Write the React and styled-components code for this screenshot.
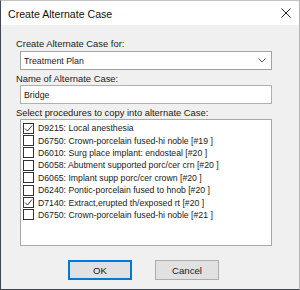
import styled, { createGlobalStyle } from "styled-components";

const GlobalStyle = createGlobalStyle`
  html, body {
    margin: 0;
    padding: 0;
    background: #f0f0f0;
  }
  * {
    box-sizing: border-box;
  }
`;

const procedures = [
  { code: "D9215", text: "Local anesthesia", checked: true },
  { code: "D6750", text: "Crown-porcelain fused-hi noble [#19 ]" },
  { code: "D6010", text: "Surg place implant: endosteal [#20 ]" },
  { code: "D6058", text: "Abutment supported porc/cer crn [#20 ]" },
  { code: "D6065", text: "Implant supp porc/cer crown [#20 ]" },
  { code: "D6240", text: "Pontic-porcelain fused to hnob [#20 ]" },
  { code: "D7140", text: "Extract,erupted th/exposed rt [#20 ]", checked: true },
  { code: "D6750", text: "Crown-porcelain fused-hi noble [#21 ]" },
];

const App = () => {
  return (
    <>
      <GlobalStyle />
      <Window>
        <TitleBar>
          <Title>Create Alternate Case</Title>
          <CloseButton>
            <svg width="10" height="10" viewBox="0 0 10 10">
              <path d="M0.5 0.5 L9.5 9.5 M9.5 0.5 L0.5 9.5" stroke="#222" strokeWidth="1" />
            </svg>
          </CloseButton>
        </TitleBar>
        <Body>
          <Label $top={12}>Create Alternate Case for:</Label>
          <Combo>
            <span>Treatment Plan</span>
            <svg width="8" height="5" viewBox="0 0 8 5">
              <path d="M0.5 0.5 L4 4 L7.5 0.5" stroke="#555" strokeWidth="1" fill="none" />
            </svg>
          </Combo>
          <Label $top={2}>Name of Alternate Case:</Label>
          <TextBox>Bridge</TextBox>
          <Label $top={2}>Select procedures to copy into alternate Case:</Label>
          <ListBox>
            {procedures.map((p, i) => (
              <Row key={i}>
                <CheckBox>
                  {p.checked && (
                    <svg width="9" height="9" viewBox="0 0 9 9">
                      <path d="M1 4.5 L3.5 7 L8 1.5" stroke="#333" strokeWidth="1" fill="none" />
                    </svg>
                  )}
                </CheckBox>
                <span>
                  {p.code}: {p.text}
                </span>
              </Row>
            ))}
          </ListBox>
          <Buttons>
            <Button $default>OK</Button>
            <Button>Cancel</Button>
          </Buttons>
        </Body>
      </Window>
    </>
  );
};

export default App;

const Window = styled.div`
  width: 300px;
  height: 290px;
  display: flex;
  flex-direction: column;
  background: #f0f0f0;
  border-top: 1px solid #c4c4c4;
  border-right: 1px solid #b4b4b4;
  border-left: 1px solid #3f4552;
  border-bottom: 1px solid #3f4552;
  font-family: "Liberation Sans", Arial, sans-serif;
  font-size: 9.4px;
  color: #1a1a1a;
`;

const TitleBar = styled.div`
  height: 24px;
  background: #fff;
  display: flex;
  align-items: center;
  justify-content: space-between;
  padding: 0 8px 0 7px;
`;

const Title = styled.div`
  font-size: 10.6px;
  color: #111;
  margin-top: 1px;
`;

const CloseButton = styled.div`
  width: 10px;
  height: 10px;
  display: flex;
`;

const Body = styled.div`
  flex: 1;
  display: flex;
  flex-direction: column;
  padding: 0 0 0 15px;
`;

const Label = styled.div`
  margin-top: ${(p) => p.$top}px;
  height: 13px;
  line-height: 13px;
`;

const Combo = styled.div`
  margin: 1px 0 0 4px;
  width: 252px;
  height: 19px;
  background: #fff;
  border: 1px solid #a2a2a2;
  display: flex;
  align-items: center;
  justify-content: space-between;
  padding: 0 5px 0 3px;
  font-size: 8.8px;
`;

const TextBox = styled.div`
  margin: 0 0 0 4px;
  width: 252px;
  height: 19px;
  background: #fff;
  border: 1px solid #b0b0b0;
  display: flex;
  align-items: center;
  padding: 0 3px;
  font-size: 8.8px;
`;

const ListBox = styled.div`
  margin: 0 0 0 4px;
  width: 252px;
  height: 127px;
  background: #fff;
  border: 1px solid #a8a8a8;
  padding: 2px 0 0 2px;
  font-size: 8.7px;
`;

const Row = styled.div`
  height: 12.4px;
  display: flex;
  align-items: center;
  gap: 4px;
  white-space: nowrap;
`;

const CheckBox = styled.div`
  width: 11px;
  height: 11px;
  flex: none;
  border: 1px solid #333;
  background: #fff;
  display: flex;
  align-items: center;
  justify-content: center;
`;

const Buttons = styled.div`
  margin-top: 14px;
  display: flex;
  gap: 23px;
  padding-left: 52px;
`;

const Button = styled.div`
  width: 64px;
  height: 20px;
  background: #e1e1e1;
  border: ${(p) => (p.$default ? "2px solid #0078d7" : "1px solid #adadad")};
  display: flex;
  align-items: center;
  justify-content: center;
  font-size: 9.6px;
`;
